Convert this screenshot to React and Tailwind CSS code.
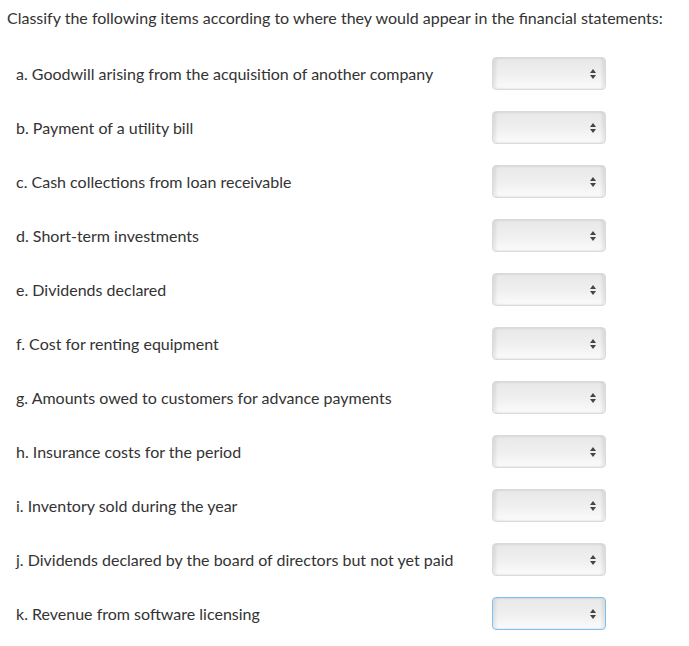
const items = [
  "a. Goodwill arising from the acquisition of another company",
  "b. Payment of a utility bill",
  "c. Cash collections from loan receivable",
  "d. Short-term investments",
  "e. Dividends declared",
  "f. Cost for renting equipment",
  "g. Amounts owed to customers for advance payments",
  "h. Insurance costs for the period",
  "i. Inventory sold during the year",
  "j. Dividends declared by the board of directors but not yet paid",
  "k. Revenue from software licensing",
];

const SelectBox = ({ focused }) => (
  <div
    className={
      "relative w-[114px] h-[33px] rounded-[4px] border bg-gradient-to-b from-[#e8e8e8] via-[#efefef] to-[#fbfbfb] shadow-[inset_3px_0_3px_rgba(0,0,0,0.07),inset_-3px_0_3px_rgba(0,0,0,0.07)] " +
      (focused ? "border-[#7cc0f0]" : "border-[#dadada]")
    }
  >
    <svg
      className="absolute right-[9px] top-[11px]"
      width="6"
      height="10"
      viewBox="0 0 6 10"
    >
      <polygon points="3,0 6,4 0,4" fill="#444" />
      <polygon points="0,6 6,6 3,10" fill="#444" />
    </svg>
  </div>
);

export default function App() {
  return (
    <div className="w-[689px] min-h-[646px] bg-white text-[#333] font-['Lato',sans-serif]">
      <div className="pl-[7px] pt-[6px] text-[16px] leading-[24px]">
        Classify the following items according to where they would appear in the financial statements:
      </div>
      <div className="mt-[16px] pl-[16px]">
        {items.map((item, i) => (
          <div key={i} className="h-[54px] flex items-center">
            <div className="w-[476px] pt-[2px] text-[16px]">{item}</div>
            <SelectBox focused={i === items.length - 1} />
          </div>
        ))}
      </div>
    </div>
  );
}
